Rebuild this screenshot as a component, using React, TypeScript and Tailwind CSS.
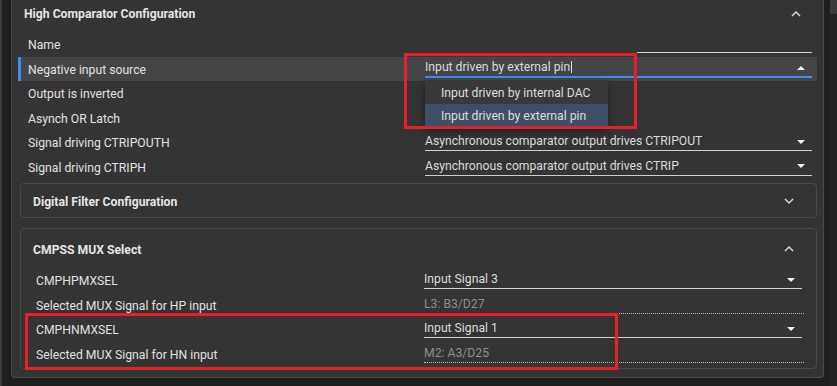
import { ReactNode } from "react";

const Chevron = ({ up }: { up: boolean }) => (
  <svg width="14" height="14" viewBox="0 0 14 14" className="text-[#d6d6d6]">
    <path
      d={up ? "M3 9 L7 5 L11 9" : "M3 5 L7 9 L11 5"}
      fill="none"
      stroke="currentColor"
      strokeWidth="1.5"
    />
  </svg>
);

const Tri = ({ up }: { up?: boolean }) => (
  <svg width="10" height="6" viewBox="0 0 10 6" className="text-[#f0f0f0]">
    <path d={up ? "M1 5 L5 1 L9 5 Z" : "M1 1 L5 5 L9 1 Z"} fill="currentColor" />
  </svg>
);

type RowProps = {
  label: string;
  children?: ReactNode;
  active?: boolean;
  inCard?: boolean;
};

const Row = ({ label, children, active, inCard }: RowProps) => (
  <div
    className={`h-[24.5px] flex items-center ${
      inCard ? "pl-[15px] pr-[14px]" : "mx-[6px] pl-[10px] pr-[5px]"
    } relative ${active ? "bg-[#454545]" : ""}`}
  >
    {active && <div className="absolute left-0 top-0 bottom-0 w-[3px] bg-[#3b8ff0]" />}
    <div className={`${inCard ? "w-[388px]" : "w-[397px]"} shrink-0 text-[#e0e0e0] pt-[2px]`}>{label}</div>
    <div className="flex-1 h-full relative">{children}</div>
  </div>
);

const Select = ({ value, open }: { value: string; open?: boolean }) => (
  <div
    className={`absolute left-0 right-0 top-[1px] h-[20px] flex items-center justify-between pr-[6px] pt-[2px] ${
      open ? "border-b-2 border-[#3b8ff0]" : "border-b border-[#cfcfcf]"
    }`}
  >
    <span className="text-[#dadada] flex items-center">
      {value}
      {open && <span className="inline-block w-px h-[12px] bg-[#e0e0e0] ml-px" />}
    </span>
    <Tri up={open} />
  </div>
);

const ReadOnly = ({ value }: { value: string }) => (
  <div className="absolute left-0 right-[-2px] top-[1px] h-[20px] flex items-center pt-[2px] border-b border-dotted border-[#bdbdbd]">
    <span className="text-[#8c8c8c]">{value}</span>
  </div>
);

const Card = ({ title, up, children }: { title: string; up: boolean; children?: ReactNode }) => (
  <div className="mx-[8px] mr-[6px] border border-[#4a4a4a] rounded-[4px] bg-[#343434]">
    <div className={`${children ? "h-[39px]" : "h-[33px]"} flex items-center justify-between pl-[12px] pr-[20px]`}>
      <span className="font-bold text-[#e4e4e4] pt-[3px]">{title}</span>
      <Chevron up={up} />
    </div>
    {children && <div className="pb-[2px]">{children}</div>}
  </div>
);

export default function App() {
  return (
    <div
      className="w-[837px] h-[386px] bg-[#1e1e1e] flex relative overflow-hidden text-[12.2px] leading-none"
      style={{ fontFamily: "Roboto, 'Liberation Sans', sans-serif" }}
    >
      <div className="w-[2px] bg-[#3c3c3c]" />
      <div className="w-[9px]" />
      <div className="w-[813px] flex flex-col">
        <div className="bg-[#343434] border-x border-b border-[#4a4a4a] rounded-b-[4px] pb-[8px]">
          <div className="h-[28px] flex items-center justify-between pl-[12px] pr-[20px]">
            <span className="font-bold text-[#e4e4e4]">High Comparator Configuration</span>
            <Chevron up />
          </div>
          <div className="pt-[4px] pb-[4px] flex flex-col">
            <Row label="Name">
              <div className="absolute right-0 w-[175px] top-[20px] border-b border-[#cfcfcf]" />
            </Row>
            <Row label="Negative input source" active>
              <Select value="Input driven by external pin" open />
            </Row>
            <Row label="Output is inverted" />
            <Row label="Asynch OR Latch" />
            <Row label="Signal driving CTRIPOUTH">
              <Select value="Asynchronous comparator output drives CTRIPOUT" />
            </Row>
            <Row label="Signal driving CTRIPH">
              <Select value="Asynchronous comparator output drives CTRIP" />
            </Row>
          </div>
          <div className="flex flex-col gap-[10px]">
            <Card title="Digital Filter Configuration" up={false} />
            <Card title="CMPSS MUX Select" up>
              <Row label="CMPHPMXSEL" inCard>
                <Select value="Input Signal 3" />
              </Row>
              <Row label="Selected MUX Signal for HP input" inCard>
                <ReadOnly value="L3: B3/D27" />
              </Row>
              <Row label="CMPHNMXSEL" inCard>
                <Select value="Input Signal 1" />
              </Row>
              <Row label="Selected MUX Signal for HN input" inCard>
                <ReadOnly value="M2: A3/D25" />
              </Row>
            </Card>
          </div>
        </div>
      </div>
      <div className="w-[6px]" />
      <div className="w-[7px] flex flex-col bg-[#222222]">
        <div className="h-[14px] bg-[#3a3a3a]" />
      </div>

      {/* dropdown menu */}
      <div className="absolute left-[425px] top-[80px] w-[183px] bg-[#393939] shadow-[0_4px_8px_rgba(0,0,0,0.4)]">
        <div className="h-[23.5px] flex items-center pl-[16px] pt-[2px] text-[#dcdcdc]">Input driven by internal DAC</div>
        <div className="h-[23.5px] flex items-center pl-[16px] pt-[2px] text-[#dcdcdc] bg-[#3d5068]">Input driven by external pin</div>
      </div>

      {/* annotations */}
      <div className="absolute left-[404px] top-[53px] w-[233px] h-[76px] border-[3px] border-[#e5202a]" />
      <div className="absolute left-[25px] top-[313px] w-[593px] h-[57px] border-[3px] border-[#e5202a]" />
    </div>
  );
}
